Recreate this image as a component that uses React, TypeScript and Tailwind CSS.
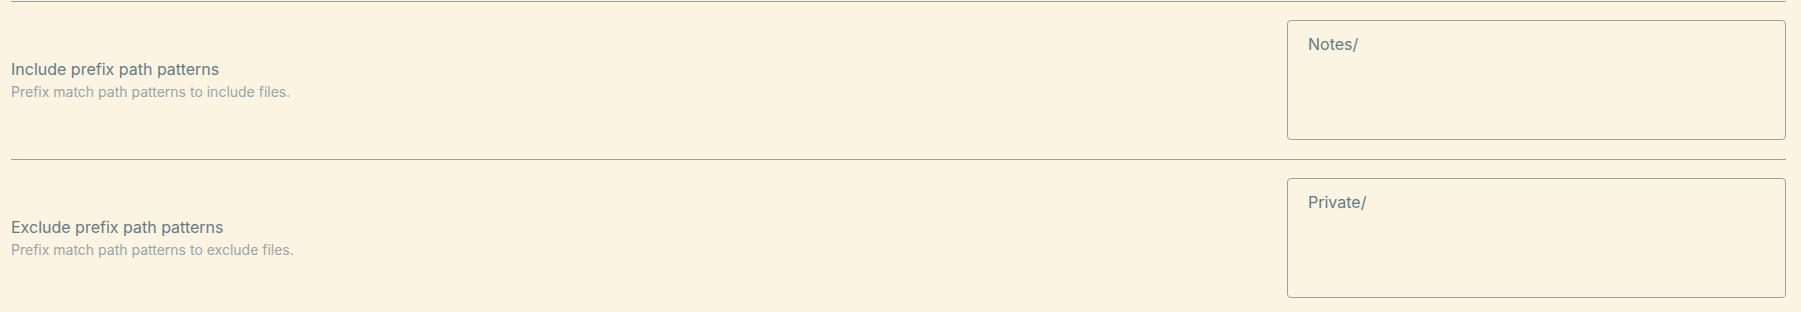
import React from "react";

const rows = [
  {
    title: "Include prefix path patterns",
    desc: "Prefix match path patterns to include files.",
    value: "Notes/",
  },
  {
    title: "Exclude prefix path patterns",
    desc: "Prefix match path patterns to exclude files.",
    value: "Private/",
  },
];

export default function App() {
  return (
    <div
      className="w-[1801px] h-[312px] bg-[#fcf4e2] pt-[1px] pl-[11px] pr-[15px] overflow-hidden"
      style={{ fontFamily: "Inter, 'Noto Sans', sans-serif" }}
    >
      {rows.map((r) => (
        <div
          key={r.title}
          className="flex items-center justify-between border-t border-[#96a3a3] pt-[18px] pb-[19px]"
        >
          <div className="flex flex-col">
            <div className="text-[16px] leading-[1.3] text-[#657b84]">{r.title}</div>
            <div className="pt-[4px] text-[14px] leading-[1.3] text-[#98a5a6]">{r.desc}</div>
          </div>
          <textarea
            defaultValue={r.value}
            className="w-[499px] h-[120px] resize-none rounded-[4px] border border-[#96a3a3] bg-transparent pl-[20px] pr-[19px] pt-[11px] text-[16px] leading-[1.5] text-[#657b84] outline-none"
            style={{ fontFamily: "Inter, 'Noto Sans', sans-serif" }}
          />
        </div>
      ))}
    </div>
  );
}
